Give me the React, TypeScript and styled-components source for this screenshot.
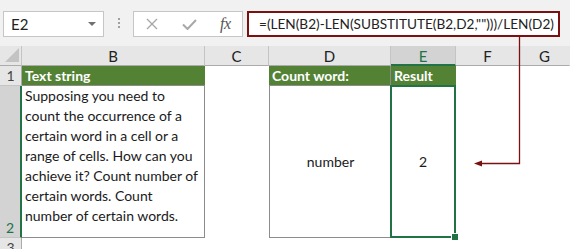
import React from "react";
import styled, { createGlobalStyle } from "styled-components";

const Global = createGlobalStyle`
  html, body { margin: 0; padding: 0; background: #ffffff; overflow: hidden; }
  body { font-family: "Lato", "Open Sans", sans-serif; }
`;

const Page = styled.div`
  position: relative;
  width: 570px;
  height: 249px;
  overflow: hidden;
  background: #ffffff;
  font-family: "Lato", "Open Sans", sans-serif;
`;

const Toolbar = styled.div`
  height: 46px;
  box-sizing: border-box;
  padding-top: 11px;
  background: #f1f1f1;
  display: flex;
  align-items: flex-start;
`;

const Box = styled.div<{ $w: number; $ml: number }>`
  box-sizing: border-box;
  width: ${(p) => p.$w}px;
  margin-left: ${(p) => p.$ml}px;
  height: 26px;
  background: #ffffff;
  border: 1px solid #c6c6c6;
  display: flex;
  align-items: center;
`;

const NameText = styled.span`
  font-size: 15px;
  color: #222;
  margin-left: 7px;
  flex: 1;
`;

const Caret = styled.span`
  width: 0;
  height: 0;
  border-left: 4px solid transparent;
  border-right: 4px solid transparent;
  border-top: 4px solid #707070;
  margin-right: 7px;
`;

const Dots = styled.div`
  margin-left: 14px;
  margin-top: 7px;
  display: flex;
  flex-direction: column;
  gap: 2px;
  span {
    width: 2px;
    height: 2px;
    background: #a0a0a0;
  }
`;

const IconSlot = styled.span<{ $ml: number }>`
  margin-left: ${(p) => p.$ml}px;
  display: flex;
  align-items: center;
`;

const Fx = styled.span`
  font-family: "Liberation Serif", serif;
  font-style: italic;
  font-size: 16px;
  color: #555;
  margin-left: 23px;
  letter-spacing: -0.5px;
`;

const FormulaBox = styled.div`
  box-sizing: border-box;
  margin-left: 4px;
  width: 313px;
  height: 26px;
  border: 2px solid #7a1010;
  background: #ffffff;
  display: flex;
  align-items: center;
  padding-left: 10px;
  font-size: 13.6px;
  color: #222;
  white-space: nowrap;
  overflow: hidden;
`;

const Grid = styled.div`
  display: grid;
  grid-template-columns: 22px 183px 64px 122px 65px 64px 50px;
  grid-template-rows: 20px 20px 152px 20px;
`;

const ColHead = styled.div<{ $sel?: boolean; $last?: boolean }>`
  box-sizing: border-box;
  background: ${(p) => (p.$sel ? "#d3d3d3" : "#e6e6e6")};
  border-right: 1px solid ${(p) => (p.$last ? "transparent" : "#c4c4c4")};
  border-bottom: ${(p) => (p.$sel ? "2px solid #217346" : "1px solid #ababab")};
  color: ${(p) => (p.$sel ? "#217346" : "#222")};
  font-size: 15px;
  display: flex;
  align-items: center;
  justify-content: center;
  padding-top: ${(p) => (p.$sel ? "1px" : "0")};
`;

const Corner = styled.div`
  box-sizing: border-box;
  background: #e6e6e6;
  border-right: 1px solid #c4c4c4;
  border-bottom: 1px solid #ababab;
  position: relative;
  &::after {
    content: "";
    position: absolute;
    right: 2px;
    bottom: 3px;
    width: 0;
    height: 0;
    border-left: 14px solid transparent;
    border-bottom: 14px solid #c3c3c3;
  }
`;

const RowHead = styled.div<{ $sel?: boolean }>`
  box-sizing: border-box;
  background: ${(p) => (p.$sel ? "#d3d3d3" : "#e6e6e6")};
  border-right: ${(p) => (p.$sel ? "2px solid #217346" : "1px solid #ababab")};
  border-bottom: 1px solid #c4c4c4;
  color: ${(p) => (p.$sel ? "#217346" : "#444")};
  font-size: 14px;
  display: flex;
  justify-content: center;
  align-items: ${(p) => (p.$sel ? "flex-end" : "center")};
  padding-bottom: ${(p) => (p.$sel ? "1px" : "0")};
`;

const HeadCell = styled.div<{ $divider?: boolean }>`
  box-sizing: border-box;
  background: #548235;
  color: #ffffff;
  font-weight: 700;
  font-size: 14px;
  padding-left: 3px;
  display: flex;
  align-items: center;
  border-bottom: 1px solid #8c8c8c;
  border-right: ${(p) => (p.$divider ? "1px solid #8c8c8c" : "none")};
  white-space: nowrap;
`;

const Blank = styled.div``;

const TextCell = styled.div`
  box-sizing: border-box;
  border-right: 1px solid #8c8c8c;
  border-bottom: 1px solid #8c8c8c;
  padding-left: 3px;
  font-size: 14px;
  line-height: 20px;
  color: #1a1a1a;
  white-space: nowrap;
`;

const CenterCell = styled.div<{ $left?: boolean }>`
  box-sizing: border-box;
  border-left: ${(p) => (p.$left ? "1px solid #8c8c8c" : "none")};
  border-bottom: 1px solid #8c8c8c;
  font-size: 14px;
  color: #1a1a1a;
  display: flex;
  align-items: center;
  justify-content: center;
`;

const SelectedCell = styled.div`
  box-sizing: border-box;
  border: 2px solid #217346;
  margin-top: -1px;
  margin-left: -1px;
  font-size: 14px;
  color: #1a1a1a;
  display: flex;
  align-items: center;
  justify-content: center;
  position: relative;
`;

const Handle = styled.span`
  position: absolute;
  right: -5px;
  bottom: -5px;
  width: 6px;
  height: 6px;
  background: #217346;
  border: 1px solid #ffffff;
`;

const Overlay = styled.svg`
  position: absolute;
  left: 0;
  top: 0;
  pointer-events: none;
`;

const lines = [
  "Supposing you need to",
  "count the occurrence of a",
  "certain word in a cell or a",
  "range of cells. How can you",
  "achieve it? Count number of",
  "certain words. Count",
  "number of certain words.",
];

const cols = ["B", "C", "D", "E", "F", "G"];

export default function App() {
  return (
    <Page>
      <Global />
      <Toolbar>
        <Box $w={101} $ml={3}>
          <NameText>E2</NameText>
          <Caret />
        </Box>
        <Dots>
          <span />
          <span />
          <span />
        </Dots>
        <Box $w={110} $ml={13}>
          <IconSlot $ml={12}>
            <svg width="12" height="12" viewBox="0 0 12 12">
              <path d="M1 1 L11 11 M11 1 L1 11" stroke="#a8a8a8" strokeWidth="1.4" fill="none" />
            </svg>
          </IconSlot>
          <IconSlot $ml={24}>
            <svg width="15" height="11" viewBox="0 0 15 11">
              <path d="M1 5.5 L5.5 10 L14 1" stroke="#a8a8a8" strokeWidth="2" fill="none" />
            </svg>
          </IconSlot>
          <Fx>fx</Fx>
        </Box>
        <FormulaBox>=(LEN(B2)-LEN(SUBSTITUTE(B2,D2,"")))/LEN(D2)</FormulaBox>
      </Toolbar>
      <Grid>
        <Corner />
        {cols.map((c, i) => (
          <ColHead key={c} $sel={c === "E"} $last={i === cols.length - 1}>
            {c}
          </ColHead>
        ))}

        <RowHead>1</RowHead>
        <HeadCell>Text string</HeadCell>
        <Blank />
        <HeadCell $divider>Count word:</HeadCell>
        <HeadCell>Result</HeadCell>
        <Blank />
        <Blank />

        <RowHead $sel>2</RowHead>
        <TextCell>
          {lines.map((l) => (
            <div key={l}>{l}</div>
          ))}
        </TextCell>
        <Blank />
        <CenterCell $left>number</CenterCell>
        <SelectedCell>
          2
          <Handle />
        </SelectedCell>
        <Blank />
        <Blank />

        <RowHead>3</RowHead>
      </Grid>
      <Overlay width="570" height="249" viewBox="0 0 570 249">
        <path d="M519.5 37 L519.5 163.5 L480 163.5" stroke="#7a1010" strokeWidth="1.3" fill="none" />
        <path d="M474 163.5 L482 160.5 L482 166.5 Z" fill="#7a1010" />
      </Overlay>
    </Page>
  );
}
